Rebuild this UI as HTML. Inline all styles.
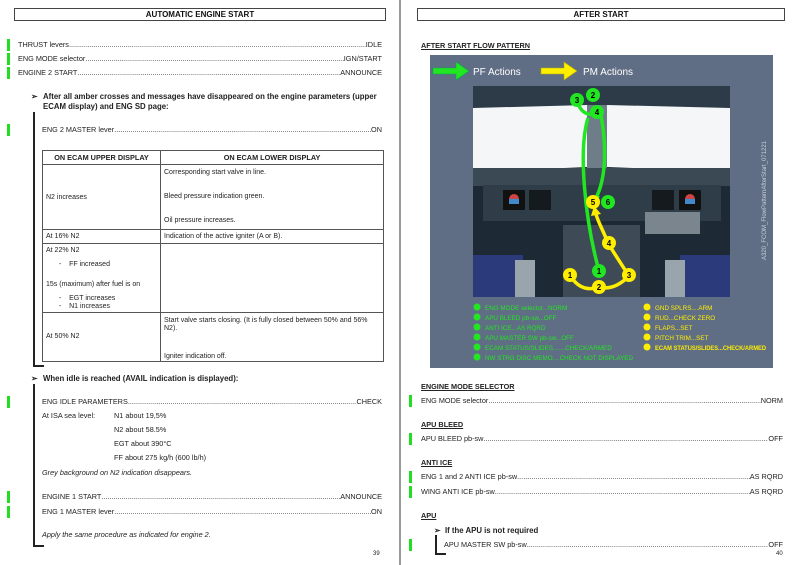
<!DOCTYPE html>
<html><head><meta charset="utf-8"><style>
*{margin:0;padding:0;box-sizing:border-box}
body{width:800px;height:565px;background:#fff;position:relative;overflow:hidden;font-family:"Liberation Sans",sans-serif;font-size:7.3px;color:#222}
.a{position:absolute;white-space:nowrap}
.hd{position:absolute;border:1px solid #444;height:13px;font-weight:bold;font-size:8px;text-align:center;line-height:11px;color:#111}
.row{position:absolute;display:flex;height:10px;line-height:10px;overflow:hidden}
.row .d{flex:1;overflow:hidden;white-space:nowrap}
.row .d:after{content:"..............................................................................................................................................................................................................................................................."}
.g{position:absolute;width:3px;height:12px;background:#22dd22}
.b{font-weight:bold;font-size:7.8px}
.u{text-decoration:underline}
.vl{position:absolute;width:1.5px;background:#222}
.hl{position:absolute;height:1.5px;background:#222}
table{position:absolute;border-collapse:collapse;font-size:7px}
td{border:1px solid #555;vertical-align:middle;padding:0 3px}
.it{font-style:italic}
</style></head><body>
<div style="position:absolute;left:399px;top:0;width:2px;height:565px;background:#999"></div>

<div class="hd" style="left:14px;top:8px;width:372px">AUTOMATIC ENGINE START</div>
<div class="hd" style="left:417px;top:8px;width:368px">AFTER START</div>

<div class="g" style="left:7px;top:39px"></div><div class="row" style="left:18px;top:40px;width:364px"><span>THRUST levers</span><span class="d"></span><span>IDLE</span></div>
<div class="g" style="left:7px;top:53px"></div><div class="row" style="left:18px;top:54px;width:364px"><span>ENG MODE selector</span><span class="d"></span><span>IGN/START</span></div>
<div class="g" style="left:7px;top:67px"></div><div class="row" style="left:18px;top:68px;width:364px"><span>ENGINE 2 START</span><span class="d"></span><span>ANNOUNCE</span></div>

<div class="a b" style="left:31px;top:92px">➢</div>
<div class="a b" style="left:43px;top:92px">After all amber crosses and messages have disappeared on the engine parameters (upper</div>
<div class="a b" style="left:43px;top:102px">ECAM display) and ENG SD page:</div>
<div class="vl" style="left:33px;top:112px;height:254px"></div>
<div class="hl" style="left:33px;top:365px;width:11px"></div>

<div class="g" style="left:7px;top:124px"></div><div class="row" style="left:42px;top:125px;width:340px"><span>ENG 2 MASTER lever</span><span class="d"></span><span>ON</span></div>

<table style="left:42px;top:150px;width:342px">
<tr style="height:14px"><td style="width:118px;font-weight:bold;font-size:7.3px;text-align:center">ON ECAM UPPER DISPLAY</td><td style="font-weight:bold;font-size:7.3px;text-align:center">ON ECAM LOWER DISPLAY</td></tr>
<tr style="height:65px"><td>N2 increases</td><td style="line-height:12px">Corresponding start valve in line.<br><br>Bleed pressure indication green.<br><br>Oil pressure increases.</td></tr>
<tr style="height:14px"><td>At 16% N2</td><td>Indication of the active igniter (A or B).</td></tr>
<tr style="height:67px"><td style="vertical-align:top;padding-top:3px;line-height:8.5px">At 22% N2<br><div style="margin:5px 0 0 13px">-&nbsp;&nbsp;&nbsp;&nbsp;FF increased</div><div style="margin-top:12px">15s (maximum) after fuel is on</div><div style="margin:5px 0 0 13px">-&nbsp;&nbsp;&nbsp;&nbsp;EGT increases<br>-&nbsp;&nbsp;&nbsp;&nbsp;N1 increases</div></td><td></td></tr>
<tr style="height:48px"><td>At 50% N2</td><td style="vertical-align:top;padding-top:4px;line-height:8.5px">Start valve starts closing. (It is fully closed between 50% and 56% N2).<div style="margin-top:19px">Igniter indication off.</div></td></tr>
</table>

<div class="a b" style="left:31px;top:374px">➢</div>
<div class="a b" style="left:43px;top:374px">When idle is reached (AVAIL indication is displayed):</div>
<div class="vl" style="left:33px;top:384px;height:162px"></div>
<div class="hl" style="left:33px;top:545px;width:11px"></div>

<div class="g" style="left:7px;top:396px"></div><div class="row" style="left:42px;top:397px;width:340px"><span>ENG IDLE PARAMETERS</span><span class="d"></span><span>CHECK</span></div>
<div class="a" style="left:42px;top:411px">At ISA sea level:</div>
<div class="a" style="left:114px;top:411px">N1 about 19,5%</div>
<div class="a" style="left:114px;top:425px">N2 about 58.5%</div>
<div class="a" style="left:114px;top:439px">EGT about 390°C</div>
<div class="a" style="left:114px;top:453px">FF about 275 kg/h (600 lb/h)</div>
<div class="a it" style="left:42px;top:468px">Grey background on N2 indication disappears.</div>
<div class="g" style="left:7px;top:491px"></div><div class="row" style="left:42px;top:492px;width:340px"><span>ENGINE 1 START</span><span class="d"></span><span>ANNOUNCE</span></div>
<div class="g" style="left:7px;top:506px"></div><div class="row" style="left:42px;top:507px;width:340px"><span>ENG 1 MASTER lever</span><span class="d"></span><span>ON</span></div>
<div class="a it" style="left:42px;top:530px">Apply the same procedure as indicated for engine 2.</div>
<div class="a" style="left:373px;top:551px;font-size:6px">39</div>

<!-- right page -->
<div class="a b u" style="left:421px;top:41px;font-size:7.3px">AFTER START FLOW PATTERN</div>
<div style="position:absolute;left:430px;top:55px;width:343px;height:313px;background:#5f6e84"></div>
<svg style="position:absolute;left:0;top:0" width="800" height="565">
<polygon points="433,68 456,68 456,62 469,71 456,80 456,74 433,74" fill="#22e622" stroke="#0a5" stroke-width=".6"/>
<polygon points="541,68 564,68 564,62 577,71 564,80 564,74 541,74" fill="#ffee00" stroke="#aa0" stroke-width=".6"/>
<text x="473" y="75" fill="#fff" font-size="10" font-family="Liberation Sans">PF Actions</text>
<text x="583" y="75" fill="#fff" font-size="10" font-family="Liberation Sans">PM Actions</text>
<rect x="473" y="86" width="257" height="211" fill="#1d2a35"/>
<rect x="473" y="86" width="257" height="22" fill="#2c3b47"/>
<polygon points="473,108 587,105 587,167 473,172" fill="#f4f6f8"/>
<polygon points="607,105 730,108 730,172 607,167" fill="#f4f6f8"/>
<rect x="587" y="105" width="20" height="65" fill="#6e7d88"/>
<rect x="473" y="168" width="257" height="18" fill="#3a4954"/>
<rect x="483" y="185" width="238" height="36" fill="#2f3d48"/>
<rect x="503" y="190" width="22" height="20" fill="#111"/><circle cx="514" cy="199" r="5" fill="#c44"/><rect x="509" y="199" width="10" height="5" fill="#48c"/>
<rect x="529" y="190" width="22" height="20" fill="#151a1e"/>
<rect x="652" y="190" width="22" height="20" fill="#151a1e"/>
<rect x="679" y="190" width="22" height="20" fill="#111"/><circle cx="690" cy="199" r="5" fill="#c44"/><rect x="685" y="199" width="10" height="5" fill="#48c"/>
<rect x="645" y="212" width="55" height="22" fill="#7a858e"/>
<rect x="563" y="225" width="77" height="72" fill="#3e4a55"/>
<rect x="473" y="255" width="50" height="42" fill="#2a3a7a"/>
<rect x="680" y="255" width="50" height="42" fill="#2a3a7a"/>
<rect x="515" y="260" width="20" height="37" fill="#99a4ad"/>
<rect x="665" y="260" width="20" height="37" fill="#99a4ad"/>
<path d="M599,271 C585,220 578,150 588,118" fill="none" stroke="#22e622" stroke-width="3.5"/>
<path d="M578,102 C580,115 595,118 600,110 C608,150 605,180 596,198" fill="none" stroke="#22e622" stroke-width="3.5"/>
<polygon points="590,196 600,196 594,206" fill="#22e622"/>
<path d="M571,277 C580,290 590,290 599,287 C610,290 620,285 629,276 C620,262 612,250 608,243 C603,230 598,222 596,214" fill="none" stroke="#ffee00" stroke-width="3.5"/>
<polygon points="591,216 601,214 594,206" fill="#ffee00"/>
<g font-family="Liberation Sans" font-size="8" font-weight="bold" text-anchor="middle">
<circle cx="577" cy="100" r="7" fill="#22e622"/><text x="577" y="103">3</text>
<circle cx="593" cy="95" r="7" fill="#22e622"/><text x="593" y="98">2</text>
<circle cx="597" cy="112" r="7" fill="#22e622"/><text x="597" y="115">4</text>
<circle cx="593" cy="202" r="7" fill="#ffee00"/><text x="593" y="205">5</text>
<circle cx="608" cy="202" r="7" fill="#22e622"/><text x="608" y="205">6</text>
<circle cx="599" cy="271" r="7" fill="#22e622"/><text x="599" y="274">1</text>
<circle cx="570" cy="275" r="7" fill="#ffee00"/><text x="570" y="278">1</text>
<circle cx="599" cy="287" r="7" fill="#ffee00"/><text x="599" y="290">2</text>
<circle cx="629" cy="275" r="7" fill="#ffee00"/><text x="629" y="278">3</text>
<circle cx="609" cy="243" r="7" fill="#ffee00"/><text x="609" y="246">4</text>
</g>
<g font-family="Liberation Sans" font-size="6.3">
<g fill="#22e622">
<circle cx="477" cy="307" r="3.5"/><circle cx="477" cy="317" r="3.5"/><circle cx="477" cy="327" r="3.5"/><circle cx="477" cy="337" r="3.5"/><circle cx="477" cy="347" r="3.5"/><circle cx="477" cy="357" r="3.5"/>
<text x="485" y="310">ENG MODE selector...NORM</text>
<text x="485" y="320">APU BLEED pb-sw...OFF</text>
<text x="485" y="330">ANTI ICE...AS RQRD</text>
<text x="485" y="340">APU MASTER SW pb-sw...OFF</text>
<text x="485" y="350">ECAM STATUS/SLIDES.......CHECK/ARMED</text>
<text x="485" y="360" textLength="148" lengthAdjust="spacingAndGlyphs">NW STRG DISC MEMO....CHECK NOT DISPLAYED</text>
</g>
<g fill="#ffee00">
<circle cx="647" cy="307" r="3.5"/><circle cx="647" cy="317" r="3.5"/><circle cx="647" cy="327" r="3.5"/><circle cx="647" cy="337" r="3.5"/><circle cx="647" cy="347" r="3.5"/>
<text x="655" y="310">GND SPLRS....ARM</text>
<text x="655" y="320">RUD...CHECK ZERO</text>
<text x="655" y="330">FLAPS...SET</text>
<text x="655" y="340">PITCH TRIM...SET</text>
<text x="655" y="350" font-weight="bold" textLength="111" lengthAdjust="spacingAndGlyphs">ECAM STATUS/SLIDES...CHECK/ARMED</text>
</g>
</g>
<text transform="translate(766,260) rotate(-90)" fill="#c8d0da" font-size="6" font-family="Liberation Sans">A320_FCOM_FlowPatternAfterStart_071221</text>
</svg>

<div class="a b u" style="left:421px;top:382px;font-size:7.3px">ENGINE MODE SELECTOR</div>
<div class="g" style="left:409px;top:395px"></div><div class="row" style="left:421px;top:396px;width:362px"><span>ENG MODE selector</span><span class="d"></span><span>NORM</span></div>
<div class="a b u" style="left:421px;top:420px;font-size:7.3px">APU BLEED</div>
<div class="g" style="left:409px;top:433px"></div><div class="row" style="left:421px;top:434px;width:362px"><span>APU BLEED pb-sw</span><span class="d"></span><span>OFF</span></div>
<div class="a b u" style="left:421px;top:458px;font-size:7.3px">ANTI ICE</div>
<div class="g" style="left:409px;top:471px"></div><div class="row" style="left:421px;top:472px;width:362px"><span>ENG 1 and 2 ANTI ICE pb-sw</span><span class="d"></span><span>AS RQRD</span></div>
<div class="g" style="left:409px;top:486px"></div><div class="row" style="left:421px;top:487px;width:362px"><span>WING ANTI ICE pb-sw</span><span class="d"></span><span>AS RQRD</span></div>
<div class="a b u" style="left:421px;top:511px;font-size:7.3px">APU</div>
<div class="a b" style="left:434px;top:526px">➢</div>
<div class="a b" style="left:445px;top:526px">If the APU is not required</div>
<div class="vl" style="left:435px;top:535px;height:19px"></div>
<div class="hl" style="left:435px;top:553px;width:11px"></div>
<div class="g" style="left:409px;top:539px"></div><div class="row" style="left:444px;top:540px;width:339px"><span>APU MASTER SW pb-sw</span><span class="d"></span><span>OFF</span></div>
<div class="a" style="left:776px;top:551px;font-size:6px">40</div>
</body></html>
